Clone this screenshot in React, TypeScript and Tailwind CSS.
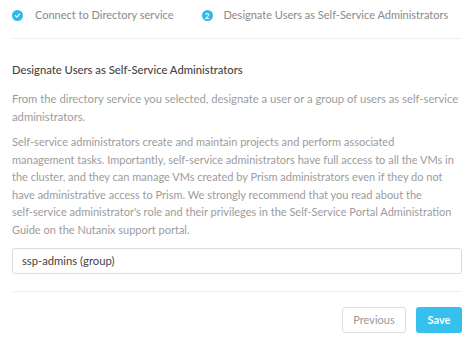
import React from "react";

const lines = [
  "Self-service administrators create and maintain projects and perform associated",
  "management tasks. Importantly, self-service administrators have full access to all the VMs in",
  "the cluster, and they can manage VMs created by Prism administrators even if they do not",
  "have administrative access to Prism. We strongly recommend that you read about the",
  "self-service administrator's role and their privileges in the Self-Service Portal Administration",
  "Guide on the Nutanix support portal.",
];

export default function App() {
  return (
    <div className="w-[474px] h-[345px] bg-white overflow-hidden font-['Lato',sans-serif]">
      <div className="flex items-center h-[30px] pl-[12px] pt-[1px]">
        <div className="flex items-center">
          <span className="flex items-center justify-center w-[11px] h-[11px] rounded-full bg-[#2cb9ee]">
            <svg width="7" height="7" viewBox="0 0 10 10">
              <path d="M2 5.2 L4.2 7.3 L8 3" fill="none" stroke="white" strokeWidth="1.8" strokeLinecap="round" strokeLinejoin="round" />
            </svg>
          </span>
          <span className="ml-[12px] text-[11px] text-[#8a8a8a]">Connect to Directory service</span>
        </div>
        <div className="flex items-center ml-[28px]">
          <span className="flex items-center justify-center w-[11px] h-[11px] rounded-full bg-[#2cb9ee] text-white text-[8px] font-bold leading-none">2</span>
          <span className="ml-[11px] text-[11px] text-[#8a8a8a]">Designate Users as Self-Service Administrators</span>
        </div>
      </div>
      <div className="mx-[12px] mt-[8px] border-t border-[#f0f0f0]" />
      <div className="px-[12px]">
        <h2 className="mt-[23px] text-[11.25px] leading-[16px] text-[#444] font-medium">Designate Users as Self-Service Administrators</h2>
        <p className="mt-[12px] text-[11.25px] leading-[18px] text-[#9c9c9c]">
          From the directory service you selected, designate a user or a group of users as self-service administrators.
        </p>
        <p className="mt-[7px] mr-[-10px] text-[11px] leading-[17.5px] text-[#9c9c9c]">
          {lines.map((l) => (
            <span key={l} className="block whitespace-nowrap">{l}</span>
          ))}
        </p>
        <div className="mt-[10px] h-[26px] border border-[#dcdcdc] rounded-[3px] flex items-center pl-[9px] text-[11.25px] text-[#444]">
          ssp-admins (group)
        </div>
        <div className="mt-[17px] border-t border-[#f0f0f0]" />
        <div className="flex justify-end gap-[10px] mt-[15px]">
          <button className="w-[64px] h-[26px] border border-[#dedede] rounded-[3px] text-[11px] text-[#999] bg-white">Previous</button>
          <button className="w-[46px] h-[26px] rounded-[3px] bg-[#35c0ee] text-[11px] text-white font-bold">Save</button>
        </div>
      </div>
    </div>
  );
}
